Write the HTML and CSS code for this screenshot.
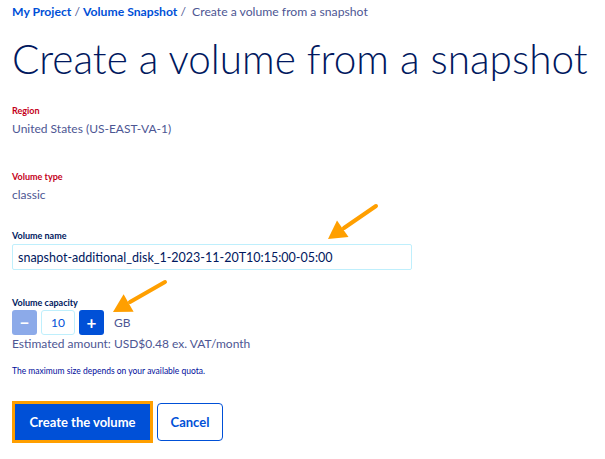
FILE: index.html
```html
<!DOCTYPE html>
<html lang="en">
<head>
    <meta charset="UTF-8">
    <meta name="viewport" content="width=device-width, initial-scale=1.0">
    <title>Create a volume from a snapshot</title>
    <link rel="stylesheet" href="styles.css">
</head>
<body>
    <nav class="breadcrumb">
        <a href="#">My Project</a> / <a href="#">Volume Snapshot</a> / <span class="current">Create a volume from a snapshot</span>
    </nav>

    <h1>Create a volume from a snapshot</h1>

    <div class="field">
        <div class="label label-red">Region</div>
        <div class="value">United States (US-EAST-VA-1)</div>
    </div>

    <div class="field">
        <div class="label label-red">Volume type</div>
        <div class="value">classic</div>
    </div>

    <div class="field field-name">
        <label class="label" for="volName">Volume name</label>
        <input type="text" id="volName" class="text-input" value="snapshot-additional_disk_1-2023-11-20T10:15:00-05:00">
    </div>

    <div class="field field-capacity">
        <label class="label" for="capacity">Volume capacity</label>
        <div class="stepper">
            <button class="step step-off" aria-label="decrease">&minus;</button>
            <input type="text" id="capacity" class="step-input" value="10">
            <button class="step" aria-label="increase">+</button>
            <span class="unit">GB</span>
        </div>
        <div class="value">Estimated amount: USD$0.48 ex. VAT/month</div>
        <p class="hint">The maximum size depends on your available quota.</p>
    </div>

    <div class="actions">
        <span class="highlight"><button class="btn btn-primary">Create the volume</button></span>
        <button class="btn btn-secondary">Cancel</button>
    </div>

    <!-- annotation arrows -->
    <svg class="arrow arrow-name" width="56" height="42" viewBox="0 0 56 42">
        <line x1="50" y1="4" x2="18" y2="26" stroke="#ff9f00" stroke-width="4" stroke-linecap="round"/>
        <polygon points="2,37 11,18.6 22.5,35" fill="#ff9f00"/>
    </svg>
    <svg class="arrow arrow-capacity" width="60" height="40" viewBox="0 0 60 40">
        <line x1="54" y1="4" x2="19" y2="24" stroke="#ff9f00" stroke-width="4" stroke-linecap="round"/>
        <polygon points="2,34 12.6,16.3 22.6,33.7" fill="#ff9f00"/>
    </svg>
</body>
</html>
```

FILE: styles.css
```css
body {
    font-family: Lato, "Open Sans", sans-serif;
    margin: 0;
    padding: 4px 12px;
    color: #4d5693;
    background: #fff;
    position: relative;
}
.breadcrumb {
    font-size: 12.2px;
    line-height: 16px;
    color: #4d5693;
}
.breadcrumb a {
    color: #0050d7;
    font-weight: bold;
    text-decoration: none;
}
.breadcrumb .current {
    margin-left: 3px;
}
h1 {
    font-size: 40.5px;
    font-weight: 300;
    color: #00185e;
    margin: 15px 0 22px;
    line-height: 48px;
    white-space: nowrap;
}
.field {
    margin-bottom: 34px;
}
.label {
    display: block;
    font-size: 9px;
    font-weight: bold;
    color: #00185e;
    line-height: 12px;
    margin-bottom: 4px;
}
.label-red {
    color: #c4001a;
}
.value {
    font-size: 12px;
    line-height: 16px;
}
.field-name {
    margin-bottom: 27px;
}
.field-name .label {
    margin-bottom: 2px;
}
.field + .field-name {
    margin-top: -7px;
}
.text-input {
    display: block;
    box-sizing: border-box;
    width: 400px;
    height: 26px;
    padding: 0 5px;
    border: 1px solid #bfeffc;
    border-radius: 2px;
    font-family: inherit;
    font-size: 12.5px;
    color: #00185e;
    outline: none;
}
.field-capacity .label {
    margin-bottom: 1px;
}
.stepper {
    display: flex;
    align-items: center;
    gap: 4px;
    margin-bottom: 1px;
}
.step {
    width: 25px;
    height: 25px;
    border: none;
    border-radius: 3px;
    background: #0050d7;
    color: #fff;
    font-size: 17px;
    font-weight: bold;
    padding: 0;
    line-height: 25px;
    font-family: inherit;
}
.step-off {
    background: #8caae9;
}
.step-input {
    box-sizing: border-box;
    width: 34px;
    height: 25px;
    border: 1px solid #bfeffc;
    border-radius: 3px;
    text-align: center;
    font-family: inherit;
    font-size: 12px;
    color: #0050d7;
    outline: none;
}
.unit {
    margin-left: 6px;
    font-size: 12px;
    color: #4d5693;
}
.hint {
    font-size: 8.5px;
    color: #000e9c;
    margin: 14px 0 0;
}
.field-capacity {
    margin-bottom: 25px;
}
.actions {
    display: flex;
    align-items: center;
    gap: 4px;
}
.highlight {
    display: inline-block;
    border: 3px solid #ff9f00;
    line-height: 0;
}
.btn {
    font-family: inherit;
    font-size: 13px;
    font-weight: bold;
    height: 36px;
    padding: 0 8px;
    border-radius: 3px;
    cursor: pointer;
}
.btn-primary {
    background: #0050d7;
    color: #fff;
    border: none;
    border-radius: 0;
    width: 135px;
}
.btn-secondary {
    background: #fff;
    color: #0050d7;
    border: 1px solid #0050d7;
    height: 38px;
    width: 66px;
    border-radius: 4px;
}
.arrow {
    position: absolute;
}
.arrow-name {
    left: 326px;
    top: 202px;
}
.arrow-capacity {
    left: 111px;
    top: 278px;
}
```
